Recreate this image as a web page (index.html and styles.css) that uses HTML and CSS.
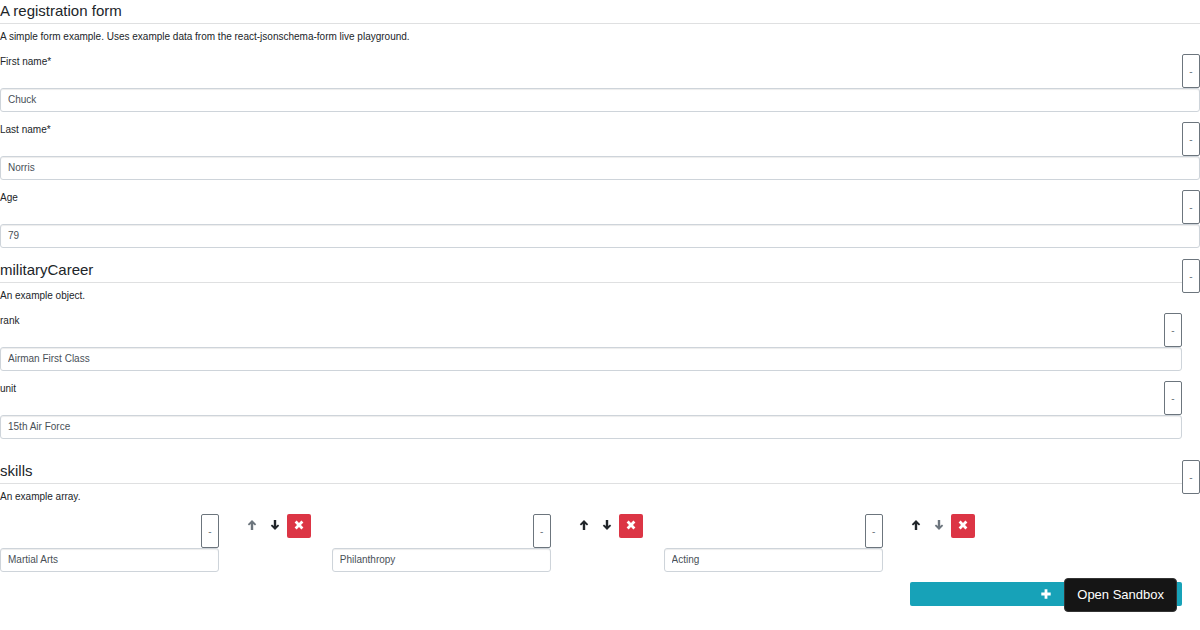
FILE: index.html
```html
<!DOCTYPE html>
<html lang="en">
<head>
<meta charset="utf-8">
<title>A registration form</title>
<link rel="stylesheet" href="styles.css">
</head>
<body>
<svg class="sprite" aria-hidden="true">
  <symbol id="arrow-up" viewBox="0 0 10 10"><path d="M5 0 9.2 4.2 8 5.4 6.2 3.9V10H3.8V3.9L2 5.4.8 4.2z"/></symbol>
  <symbol id="arrow-down" viewBox="0 0 10 10"><path d="M5 10 .8 5.8 2 4.6l1.8 1.5V0h2.4v6.1L8 4.6l1.2 1.2z"/></symbol>
  <symbol id="remove" viewBox="0 0 10 10"><path d="M2.6.6 5 3 7.4.6l2 2L7 5l2.4 2.4-2 2L5 7 2.6 9.4l-2-2L3 5 .6 2.6z"/></symbol>
  <symbol id="plus" viewBox="0 0 10 10"><path d="M3.6.3h2.8v3.3h3.3v2.8H6.4v3.3H3.6V6.4H.3V3.6h3.3z"/></symbol>
</svg>

<form class="form" action="#" method="post">
  <h1 class="title">A registration form</h1>
  <p class="description">A simple form example. Uses example data from the react-jsonschema-form live playground.</p>

  <div class="field">
    <div class="field-head">
      <label for="firstName">First name*</label>
      <button type="button" class="btn-toggle">-</button>
    </div>
    <input class="form-control" type="text" id="firstName" value="Chuck">
  </div>
  <div class="field">
    <div class="field-head">
      <label for="lastName">Last name*</label>
      <button type="button" class="btn-toggle">-</button>
    </div>
    <input class="form-control" type="text" id="lastName" value="Norris">
  </div>
  <div class="field">
    <div class="field-head">
      <label for="age">Age</label>
      <button type="button" class="btn-toggle">-</button>
    </div>
    <input class="form-control" type="text" id="age" value="79">
  </div>

  <section class="group">
    <div class="group-body">
      <h2 class="title">militaryCareer</h2>
      <p class="description">An example object.</p>
      <div class="field">
        <div class="field-head">
          <label for="rank">rank</label>
          <button type="button" class="btn-toggle">-</button>
        </div>
        <input class="form-control" type="text" id="rank" value="Airman First Class">
      </div>
      <div class="field">
        <div class="field-head">
          <label for="unit">unit</label>
          <button type="button" class="btn-toggle">-</button>
        </div>
        <input class="form-control" type="text" id="unit" value="15th Air Force">
      </div>
    </div>
    <button type="button" class="btn-toggle">-</button>
  </section>

  <section class="group">
    <div class="group-body">
      <h2 class="title">skills</h2>
      <p class="description">An example array.</p>
      <div class="array">
        <div class="array-item">
          <div class="array-field">
            <div class="field-head">
              <button type="button" class="btn-toggle">-</button>
            </div>
            <input class="form-control" type="text" aria-label="skill 1" value="Martial Arts">
          </div>
          <div class="array-tools">
            <button type="button" class="btn-icon" aria-label="Move up" disabled><svg><use href="#arrow-up"/></svg></button>
            <button type="button" class="btn-icon" aria-label="Move down"><svg><use href="#arrow-down"/></svg></button>
            <button type="button" class="btn-icon btn-danger" aria-label="Remove"><svg><use href="#remove"/></svg></button>
          </div>
        </div>
        <div class="array-item">
          <div class="array-field">
            <div class="field-head">
              <button type="button" class="btn-toggle">-</button>
            </div>
            <input class="form-control" type="text" aria-label="skill 2" value="Philanthropy">
          </div>
          <div class="array-tools">
            <button type="button" class="btn-icon" aria-label="Move up"><svg><use href="#arrow-up"/></svg></button>
            <button type="button" class="btn-icon" aria-label="Move down"><svg><use href="#arrow-down"/></svg></button>
            <button type="button" class="btn-icon btn-danger" aria-label="Remove"><svg><use href="#remove"/></svg></button>
          </div>
        </div>
        <div class="array-item">
          <div class="array-field">
            <div class="field-head">
              <button type="button" class="btn-toggle">-</button>
            </div>
            <input class="form-control" type="text" aria-label="skill 3" value="Acting">
          </div>
          <div class="array-tools">
            <button type="button" class="btn-icon" aria-label="Move up"><svg><use href="#arrow-up"/></svg></button>
            <button type="button" class="btn-icon" aria-label="Move down" disabled><svg><use href="#arrow-down"/></svg></button>
            <button type="button" class="btn-icon btn-danger" aria-label="Remove"><svg><use href="#remove"/></svg></button>
          </div>
        </div>
      </div>
      <button type="button" class="btn-add" aria-label="Add"><svg><use href="#plus"/></svg></button>
    </div>
    <button type="button" class="btn-toggle">-</button>
  </section>

  <div class="field">
    <div class="field-head">
      <label for="bio">Bio</label>
      <button type="button" class="btn-toggle">-</button>
    </div>
    <input class="form-control" type="text" id="bio">
  </div>
</form>

<a class="sandbox-link" href="#">Open Sandbox</a>
</body>
</html>
```
FILE: styles.css
```css
* {box-sizing: border-box;}
html {overflow: hidden;}
body {margin: 0; font: 10px/15px "Helvetica Neue", Helvetica, "Liberation Sans", Arial, sans-serif; color: #212529; background: #fff;}
button, input {font: inherit; margin: 0;}
svg {display: block; width: 10px; height: 10px; fill: currentColor;}
.sprite {display: none;}

.title {margin: 0; padding: 2px 0 3px; border-bottom: 1px solid #dfe0e1; font-size: 15px; font-weight: 400; line-height: 18px;}
.description {margin: 5px 0 10px;}

.field {margin-bottom: 10px;}
.field-head {display: flex; justify-content: space-between; align-items: flex-start;}
.field-head .btn-toggle {margin-left: auto;}
.form-control {display: block; width: 100%; height: 24px; padding: 0 7px 2px; border: 1px solid #ced4da; border-radius: 3px; color: #495057; background: #fff; box-shadow: inset 0 1px 1px rgba(0,0,0,.075);}

.btn-toggle {flex: none; width: 18px; height: 34px; padding: 0; border: 1px solid #6c757d; border-radius: 2px; color: #6c757d; background: transparent;}

.group {display: flex; align-items: flex-start; padding-top: 1px; margin-bottom: 10px;}
.group-body {flex: 1;}

.array {display: grid; grid-template-columns: 16fr 16fr 16fr 9fr; margin-bottom: 10px;}
.array-item {display: flex; align-items: flex-start;}
.array-field {width: 66%;}
.array-tools {display: flex; margin-left: 22px;}
.btn-icon {display: flex; align-items: center; justify-content: center; width: 23px; height: 24px; padding: 0 0 2px; border: 0; border-radius: 2px; color: #212529; background: transparent;}
.btn-icon:disabled {color: #6c757d;}
.btn-danger {width: 24px; color: #fff; background: #dc3545;}
.btn-add {display: flex; align-items: center; justify-content: center; width: 23%; height: 24px; margin: 0 0 19px auto; padding: 0; border: 0; border-radius: 2px; color: #fff; background: #17a2b8;}

.sandbox-link {position: fixed; right: 23px; bottom: 18px; padding: 8px 12px; border: 1px solid #343434; border-radius: 4px; font-size: 13px; line-height: 16px; color: #fff; background: #151515; text-decoration: none;}
```
